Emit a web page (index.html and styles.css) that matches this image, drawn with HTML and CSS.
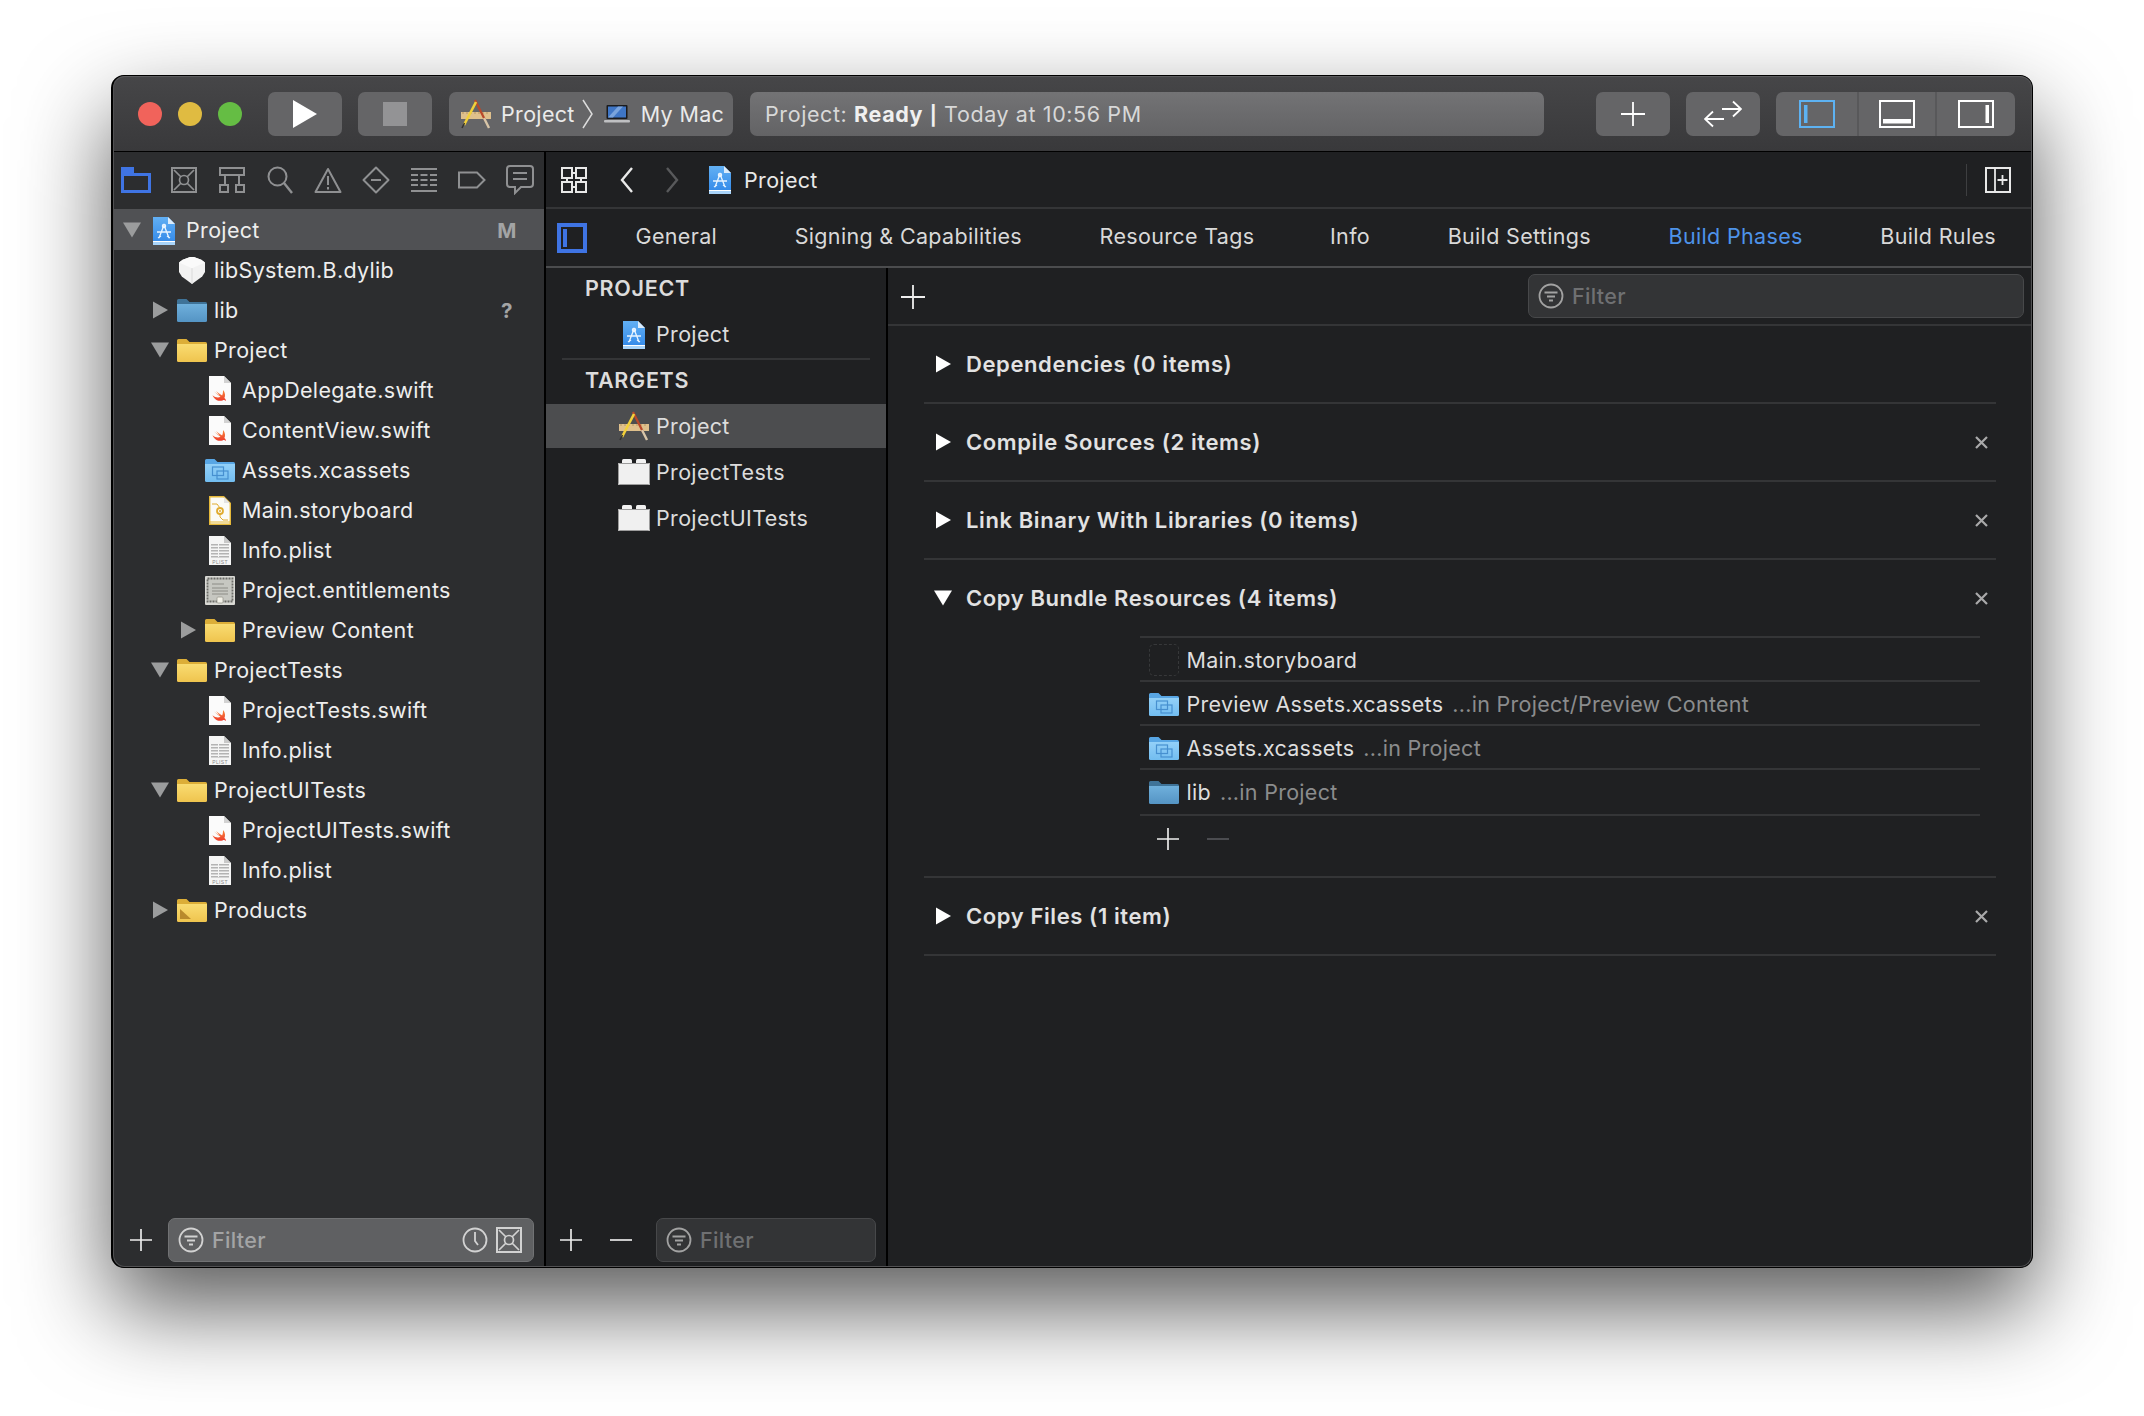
FILE: index.html
```html
<!DOCTYPE html>
<html lang="en">
<head>
<meta charset="utf-8">
<title>Project — Build Phases</title>
<link rel="stylesheet" href="styles.css">
</head>
<body>
<svg class="defs" width="0" height="0" aria-hidden="true">
  <defs>
    <linearGradient id="gy" x1="0" y1="0" x2="0" y2="1"><stop offset="0" stop-color="#f9dc72"/><stop offset="1" stop-color="#efc44e"/></linearGradient>
    <linearGradient id="gb" x1="0" y1="0" x2="0" y2="1"><stop offset="0" stop-color="#6fb0dc"/><stop offset="1" stop-color="#5494c4"/></linearGradient>
    <linearGradient id="gl" x1="0" y1="0" x2="0" y2="1"><stop offset="0" stop-color="#93d0f8"/><stop offset="1" stop-color="#72bdf0"/></linearGradient>
    <linearGradient id="gp" x1="0" y1="0" x2="0" y2="1"><stop offset="0" stop-color="#62b0f4"/><stop offset="1" stop-color="#2f86e8"/></linearGradient>
    <linearGradient id="gs" x1="0" y1="0" x2="0" y2="1"><stop offset="0" stop-color="#f8893a"/><stop offset="1" stop-color="#ee3b2d"/></linearGradient>
    <symbol id="folder" viewBox="0 0 30 24"><path d="M0 2.500A1.500 1.500 0 0 1 1.500 1h8l3 3H28.500A1.500 1.500 0 0 1 30 5.500V8H0z" fill="#dcae38"/><path d="M0 6h30v16.500a1.500 1.500 0 0 1-1.500 1.500h-27A1.500 1.500 0 0 1 0 22.500z" fill="url(#gy)"/></symbol>
    <symbol id="folder-products" viewBox="0 0 30 24"><use href="#folder" width="30" height="24"/><path d="M3 11l11 10H3z" fill="#b98a2c"/></symbol>
    <symbol id="folder-lib" viewBox="0 0 30 24"><path d="M0 2.500A1.500 1.500 0 0 1 1.500 1h8l3 3H28.500A1.500 1.500 0 0 1 30 5.500V8H0z" fill="#3f7398"/><path d="M0 6h30v16.500a1.500 1.500 0 0 1-1.500 1.500h-27A1.500 1.500 0 0 1 0 22.500z" fill="url(#gb)"/></symbol>
    <symbol id="folder-assets" viewBox="0 0 30 24"><path d="M0 2.500A1.500 1.500 0 0 1 1.500 1h8l3 3H28.500A1.500 1.500 0 0 1 30 5.500V8H0z" fill="#58a6e4"/><path d="M0 6h30v16.500a1.500 1.500 0 0 1-1.500 1.500h-27A1.500 1.500 0 0 1 0 22.500z" fill="url(#gl)"/><g fill="none" stroke="#4790d0" stroke-width="1.200"><rect x="7.500" y="9" width="11" height="8.500"/><rect x="12" y="13" width="11" height="8"/></g></symbol>
    <symbol id="doc-proj" viewBox="0 0 22 29"><path d="M0 1h15l7 7v21H0z" fill="url(#gp)"/><path d="M15 1l7 7h-7z" fill="#dcecfb"/><rect y="26" width="22" height="3" fill="#a9d4fa"/><rect y="25" width="22" height="1" fill="#fff"/><g fill="none" stroke="#e8f4ff" stroke-width="1.300"><path d="M6 22l5-13 5 13M4 16h14M8 20l-3 2M14 20l3 2"/><circle cx="11" cy="10" r="1.600"/></g></symbol>
    <symbol id="doc-swift" viewBox="0 0 22 29"><path d="M0 0h15l7 7v22H0z" fill="#fbfbfb"/><path d="M15 0l7 7h-7z" fill="#d2d2d2"/><path transform="translate(3 12.500) scale(.155 .135)" d="M72 12C85 32 88 55 80 70 88 78 92 88 90 92 84 85 76 84 68 88 50 96 28 90 14 70 8 62 5 55 3 50 20 65 38 72 55 62 40 50 25 35 12 20 25 32 40 45 52 52 42 42 32 28 25 18 40 30 52 42 65 52 72 38 70 25 72 12z" fill="url(#gs)"/></symbol>
    <symbol id="doc-board" viewBox="0 0 22 29"><path d="M.7.7h14l6.600 6.600v21H.7z" fill="#fbfbf6" stroke="#e6b93a" stroke-width="1.400"/><path d="M15 1l6 6h-6z" fill="#e3e3e3"/><path d="M3 8h5l3 4M11 17v4l3 3h5" fill="none" stroke="#e0ac30" stroke-width="1"/><circle cx="11" cy="15" r="3" fill="none" stroke="#e0ac30" stroke-width="1.800"/><circle cx="11" cy="15" r="1" fill="#e0ac30"/><path d="M1 26h20" stroke="#e6b93a" stroke-width="1"/></symbol>
    <symbol id="doc-plist" viewBox="0 0 22 29"><path d="M0 0h15l7 7v22H0z" fill="#f5f5f5"/><path d="M15 0l7 7h-7z" fill="#c8c8c8"/><g fill="#b4b4b4"><rect x="2" y="8" width="18" height="1.500"/><rect x="2" y="11" width="18" height="1.500"/><rect x="2" y="14" width="18" height="1.500"/><rect x="2" y="17" width="18" height="1.500"/><rect x="2" y="20" width="18" height="1.500"/></g><rect x="9" y="8" width="1" height="13" fill="#f5f5f5"/><text x="11" y="28" text-anchor="middle" font-family="Liberation Sans" font-size="5" fill="#8a8a8a">PLIST</text></symbol>
    <symbol id="cert" viewBox="0 0 30 29"><rect width="30" height="29" rx="1" fill="#d9d9d4"/><rect x="2.500" y="2.500" width="25" height="23" fill="#c6c7c1" stroke="#6c6c68" stroke-width="1.800" stroke-dasharray="2 1"/><path d="M7 8h12M7 12h16M7 15h16M7 18h16" stroke="#8c8c86" stroke-width="1"/><rect x="12" y="21" width="6" height="6" rx="1" fill="#f2f1e8" stroke="#9a9a90" stroke-width=".8"/></symbol>
    <symbol id="shield" viewBox="0 0 28 29"><path d="M4 3l8-3h4l8 3 4 3v10l-3 5-11 8-11-8-3-5V6z" fill="#f2f2f2"/><path d="M0 6l14 6 14-6-4-3-8-3h-4l-8 3z" fill="#fafafa"/><path d="M14 12v17" stroke="#d8d8d8" stroke-width="1"/></symbol>
    <symbol id="app" viewBox="0 0 30 30"><rect x="0" y="13" width="30" height="7" fill="#dfc08c"/><path d="M2 13v2M6 13v2M10 13v2M14 13v2M18 13v2M22 13v2M26 13v2" stroke="#a7854f" stroke-width=".7"/><path d="M14 1L24 21" stroke="#b8482a" stroke-width="2.200"/><path d="M23 19l5 10" stroke="#d8c5a8" stroke-width="2.400"/><path d="M15 3L3 26" stroke="#f2d03a" stroke-width="2.600"/><path d="M3.500 24L1 29" stroke="#333" stroke-width="1.500"/></symbol>
    <symbol id="lego" viewBox="0 0 32 26"><rect x="4" y="0" width="10" height="6" rx="1.500" fill="#f2f2f2"/><rect x="18" y="0" width="10" height="6" rx="1.500" fill="#f2f2f2"/><rect x="0" y="4" width="32" height="22" rx="1" fill="#f0f0f0"/><rect x=".5" y="4.500" width="31" height="21" rx="1" fill="none" stroke="#9c9c9c" stroke-width="1"/></symbol>
    <symbol id="mac" viewBox="0 0 26 18"><rect x="2.500" y="0" width="21" height="14" rx="1" fill="#1b1b1d"/><path d="M4 1.500h18v11H4z" fill="#3f76c6"/><path d="M4 12.500L14 1.500h5L9 12.500z" fill="#7aa4dd"/><rect x="0" y="15" width="26" height="2.500" rx="1" fill="#bfc0c2"/></symbol>
    <symbol id="tri-r" viewBox="0 0 28 18"><path d="M4 .5L19 9 4 17.500z"/></symbol>
    <symbol id="tri-d" viewBox="0 0 28 18"><path d="M2 1.500h18L11 16.500z"/></symbol>
    <symbol id="filter" viewBox="0 0 26 26"><circle cx="13" cy="13" r="11.500" fill="none" stroke="currentColor" stroke-width="1.800"/><path d="M6.500 9.500h13M9 13.500h8M11 17.500h4" stroke="currentColor" stroke-width="2"/></symbol>
    <symbol id="plus" viewBox="0 0 24 24"><path d="M12 0v24M0 12h24" stroke="currentColor" stroke-width="1.800" fill="none"/></symbol>
    <symbol id="minus" viewBox="0 0 24 24"><path d="M0 12h24" stroke="currentColor" stroke-width="1.800" fill="none"/></symbol>
    <symbol id="x" viewBox="0 0 13 13"><path d="M1 1l11 11M12 1L1 12" stroke="currentColor" stroke-width="2.200" fill="none"/></symbol>
    <symbol id="safe" viewBox="0 0 26 26"><rect x="1" y="1" width="24" height="24" fill="none" stroke="currentColor" stroke-width="2"/><circle cx="13" cy="13" r="4.500" fill="none" stroke="currentColor" stroke-width="1.700"/><path d="M3 3l7 7M23 3l-7 7M3 23l7-7M23 23l-7-7" stroke="currentColor" stroke-width="1.700"/></symbol>
    <symbol id="nv-folder" viewBox="0 0 30 26"><path d="M1.500 7.500h27v17h-27zM1.500 7.500V1.500h10v6" fill="none" stroke="#3f74e4" stroke-width="3"/><path d="M1 3h10v4H1z" fill="#3f74e4"/></symbol>
    <symbol id="nv-hier" viewBox="0 0 28 26"><g fill="none" stroke="currentColor" stroke-width="2"><rect x="2" y="1" width="24" height="7"/><path d="M7 8v10M21 8v10"/><rect x="2" y="18" width="8" height="7"/><rect x="18" y="18" width="8" height="7"/></g></symbol>
    <symbol id="nv-search" viewBox="0 0 26 28"><circle cx="10.500" cy="10.500" r="9" fill="none" stroke="currentColor" stroke-width="2"/><path d="M17 17l8 10" stroke="currentColor" stroke-width="2.400"/></symbol>
    <symbol id="nv-warn" viewBox="0 0 28 26"><path d="M14 2L26.500 25h-25z" fill="none" stroke="currentColor" stroke-width="2" stroke-linejoin="round"/><path d="M14 9v9M14 20v2.500" stroke="currentColor" stroke-width="2"/></symbol>
    <symbol id="nv-diamond" viewBox="0 0 28 28"><path d="M14 1.500L26.500 14 14 26.500 1.500 14z" fill="none" stroke="currentColor" stroke-width="2" stroke-linejoin="round"/><path d="M9 14h10" stroke="currentColor" stroke-width="2"/></symbol>
    <symbol id="nv-lines" viewBox="0 0 28 26"><path d="M1 2h26M1 24h26" stroke="currentColor" stroke-width="2"/><path d="M1 8h26M1 13h26M1 18h26" stroke="currentColor" stroke-width="2" stroke-dasharray="7 2.500"/></symbol>
    <symbol id="nv-tag" viewBox="0 0 28 18"><path d="M1 1.500h18l7.500 7.500-7.500 7.500H1z" fill="none" stroke="currentColor" stroke-width="2"/></symbol>
    <symbol id="nv-bubble" viewBox="0 0 28 30"><path d="M4 1h20a3 3 0 0 1 3 3v15a3 3 0 0 1-3 3H15l-6 6v-6H4a3 3 0 0 1-3-3V4a3 3 0 0 1 3-3z" fill="none" stroke="currentColor" stroke-width="2"/><path d="M7 8h14M7 14h14" stroke="currentColor" stroke-width="2"/></symbol>
    <symbol id="grid" viewBox="0 0 26 26"><g fill="none" stroke="currentColor" stroke-width="2"><path d="M1 1h10v10H1zM15 1h10v10H15zM1 15h10v10H1zM15 15h10v10H15z"/><path d="M11 6h4M20 11v4M6 11v4M11 20h4"/></g></symbol>
    <symbol id="addpane" viewBox="0 0 26 26"><rect x="1" y="1" width="24" height="24" fill="none" stroke="currentColor" stroke-width="2"/><path d="M10 1v24M17.500 8v10M12.500 13h10" stroke="currentColor" stroke-width="1.800" fill="none"/></symbol>
    <symbol id="pane-l" viewBox="0 0 36 28"><rect x="1" y="1" width="34" height="26" fill="none" stroke="currentColor" stroke-width="2"/><rect x="5" y="5" width="3.500" height="18" fill="currentColor"/></symbol>
    <symbol id="pane-b" viewBox="0 0 36 28"><rect x="1" y="1" width="34" height="26" fill="none" stroke="currentColor" stroke-width="2"/><rect x="4" y="19" width="28" height="4.500" fill="currentColor"/></symbol>
    <symbol id="pane-r" viewBox="0 0 36 28"><rect x="1" y="1" width="34" height="26" fill="none" stroke="currentColor" stroke-width="2"/><rect x="27.500" y="5" width="3.500" height="18" fill="currentColor"/></symbol>
    <symbol id="swap" viewBox="0 0 38 34"><path d="M18 12h19M29 4.500l8 7.500-8 7.500" fill="none" stroke="currentColor" stroke-width="1.800"/><path d="M1 22h19M9 14.500L1 22l8 7.500" fill="none" stroke="currentColor" stroke-width="1.800"/></symbol>
  </defs>
</svg>

<div class="window">
  <header class="toolbar">
    <div class="lights"><span class="light red"></span><span class="light yellow"></span><span class="light green"></span></div>
    <button class="tbtn play"><svg width="24" height="28" viewBox="0 0 24 28"><path d="M0 0l24 14L0 28z" fill="#fff"/></svg></button>
    <button class="tbtn stop"><span class="stop-box"></span></button>
    <div class="tbtn scheme">
      <svg class="ic-app" width="30" height="30"><use href="#app"/></svg>
      <span>Project</span>
      <svg class="chev" width="11" height="30" viewBox="0 0 11 30"><path d="M1 1l9 14-9 14" fill="none" stroke="#dcdcdc" stroke-width="1.500"/></svg>
      <svg class="ic-mac" width="26" height="18"><use href="#mac"/></svg>
      <span>My Mac</span>
    </div>
    <div class="status"><span>Project: <b>Ready</b> <b class="pipe">|</b> Today at 10:56 PM</span></div>
    <button class="tbtn add"><svg width="24" height="24"><use href="#plus"/></svg></button>
    <button class="tbtn arrows"><svg width="38" height="34"><use href="#swap"/></svg></button>
    <div class="segments">
      <span class="seg seg-on"><svg width="36" height="28"><use href="#pane-l"/></svg></span>
      <span class="seg seg-mid"><svg width="36" height="28"><use href="#pane-b"/></svg></span>
      <span class="seg seg-end"><svg width="36" height="28"><use href="#pane-r"/></svg></span>
    </div>
  </header>

  <div class="workspace">
    <aside class="sidebar">
      <nav class="sidebar-nav">
        <svg width="30" height="26"><use href="#nv-folder"/></svg>
        <svg width="26" height="26"><use href="#safe"/></svg>
        <svg width="28" height="26"><use href="#nv-hier"/></svg>
        <svg width="26" height="28"><use href="#nv-search"/></svg>
        <svg width="28" height="26"><use href="#nv-warn"/></svg>
        <svg width="28" height="28"><use href="#nv-diamond"/></svg>
        <svg width="28" height="26"><use href="#nv-lines"/></svg>
        <svg width="28" height="18"><use href="#nv-tag"/></svg>
        <svg width="28" height="30"><use href="#nv-bubble"/></svg>
      </nav>
      <ul class="tree">
        <li class="node l0 selected"><svg class="disc" width="28" height="18"><use href="#tri-d"/></svg><span class="slot"><svg width="22" height="29"><use href="#doc-proj"/></svg></span><span class="name">Project</span><span class="badge">M</span></li>
        <li class="node l1"><span class="disc"></span><span class="slot"><svg width="26" height="29"><use href="#shield"/></svg></span><span class="name">libSystem.B.dylib</span></li>
        <li class="node l1"><svg class="disc" width="28" height="18"><use href="#tri-r"/></svg><span class="slot"><svg width="30" height="24"><use href="#folder-lib"/></svg></span><span class="name">lib</span><span class="badge">?</span></li>
        <li class="node l1"><svg class="disc" width="28" height="18"><use href="#tri-d"/></svg><span class="slot"><svg width="30" height="24"><use href="#folder"/></svg></span><span class="name">Project</span></li>
        <li class="node l2"><span class="disc"></span><span class="slot"><svg width="22" height="29"><use href="#doc-swift"/></svg></span><span class="name">AppDelegate.swift</span></li>
        <li class="node l2"><span class="disc"></span><span class="slot"><svg width="22" height="29"><use href="#doc-swift"/></svg></span><span class="name">ContentView.swift</span></li>
        <li class="node l2"><span class="disc"></span><span class="slot"><svg width="30" height="24"><use href="#folder-assets"/></svg></span><span class="name">Assets.xcassets</span></li>
        <li class="node l2"><span class="disc"></span><span class="slot"><svg width="22" height="29"><use href="#doc-board"/></svg></span><span class="name">Main.storyboard</span></li>
        <li class="node l2"><span class="disc"></span><span class="slot"><svg width="22" height="29"><use href="#doc-plist"/></svg></span><span class="name">Info.plist</span></li>
        <li class="node l2"><span class="disc"></span><span class="slot"><svg width="30" height="29"><use href="#cert"/></svg></span><span class="name">Project.entitlements</span></li>
        <li class="node l2"><svg class="disc" width="28" height="18"><use href="#tri-r"/></svg><span class="slot"><svg width="30" height="24"><use href="#folder"/></svg></span><span class="name">Preview Content</span></li>
        <li class="node l1"><svg class="disc" width="28" height="18"><use href="#tri-d"/></svg><span class="slot"><svg width="30" height="24"><use href="#folder"/></svg></span><span class="name">ProjectTests</span></li>
        <li class="node l2"><span class="disc"></span><span class="slot"><svg width="22" height="29"><use href="#doc-swift"/></svg></span><span class="name">ProjectTests.swift</span></li>
        <li class="node l2"><span class="disc"></span><span class="slot"><svg width="22" height="29"><use href="#doc-plist"/></svg></span><span class="name">Info.plist</span></li>
        <li class="node l1"><svg class="disc" width="28" height="18"><use href="#tri-d"/></svg><span class="slot"><svg width="30" height="24"><use href="#folder"/></svg></span><span class="name">ProjectUITests</span></li>
        <li class="node l2"><span class="disc"></span><span class="slot"><svg width="22" height="29"><use href="#doc-swift"/></svg></span><span class="name">ProjectUITests.swift</span></li>
        <li class="node l2"><span class="disc"></span><span class="slot"><svg width="22" height="29"><use href="#doc-plist"/></svg></span><span class="name">Info.plist</span></li>
        <li class="node l1"><svg class="disc" width="28" height="18"><use href="#tri-r"/></svg><span class="slot"><svg width="30" height="24"><use href="#folder-products"/></svg></span><span class="name">Products</span></li>
      </ul>
      <footer class="side-foot">
        <svg class="foot-plus" width="22" height="22"><use href="#plus"/></svg>
        <div class="filter filter-light">
          <svg class="filter-ic" width="26" height="26"><use href="#filter"/></svg>
          <span class="filter-text">Filter</span>
          <svg class="clock" width="26" height="26" viewBox="0 0 26 26"><circle cx="13" cy="13" r="11.500" fill="none" stroke="currentColor" stroke-width="1.800"/><path d="M13 5v9l3 4" fill="none" stroke="currentColor" stroke-width="1.800"/></svg>
          <svg class="safe" width="26" height="26"><use href="#safe"/></svg>
        </div>
      </footer>
    </aside>

    <section class="editor">
      <div class="jump">
        <svg class="j-grid" width="26" height="26"><use href="#grid"/></svg>
        <svg class="j-back" width="14" height="26" viewBox="0 0 14 26"><path d="M12 1L2 13l10 12" fill="none" stroke="#eaeaea" stroke-width="2.400"/></svg>
        <svg class="j-fwd" width="14" height="26" viewBox="0 0 14 26"><path d="M2 1l10 12L2 25" fill="none" stroke="#58595b" stroke-width="2.400"/></svg>
        <svg class="j-doc" width="22" height="29"><use href="#doc-proj"/></svg>
        <span class="j-name">Project</span>
        <span class="j-div"></span>
        <svg class="j-add" width="26" height="26"><use href="#addpane"/></svg>
      </div>
      <div class="tabs">
        <svg class="tabs-ic" width="30" height="30" viewBox="0 0 30 30"><rect x="2" y="2" width="26" height="26" fill="none" stroke="#3f74e4" stroke-width="4"/><rect x="6" y="6" width="4" height="18" fill="#3f74e4"/></svg>
        <span class="tab">General</span>
        <span class="tab">Signing &amp; Capabilities</span>
        <span class="tab">Resource Tags</span>
        <span class="tab tab-info">Info</span>
        <span class="tab">Build Settings</span>
        <span class="tab tab-on">Build Phases</span>
        <span class="tab">Build Rules</span>
      </div>
      <div class="panes">
        <div class="targets">
          <div class="t-list">
            <div class="t-head">PROJECT</div>
            <div class="t-row t-first"><span class="t-slot"><svg width="22" height="29"><use href="#doc-proj"/></svg></span>Project</div>
            <div class="t-sep"></div>
            <div class="t-head t-head2">TARGETS</div>
            <div class="t-row t-on"><span class="t-slot"><svg width="30" height="30"><use href="#app"/></svg></span>Project</div>
            <div class="t-row"><span class="t-slot"><svg width="32" height="26"><use href="#lego"/></svg></span>ProjectTests</div>
            <div class="t-row"><span class="t-slot"><svg width="32" height="26"><use href="#lego"/></svg></span>ProjectUITests</div>
          </div>
          <footer class="t-foot">
            <svg class="t-plus" width="22" height="22"><use href="#plus"/></svg>
            <svg class="t-minus" width="22" height="22"><use href="#minus"/></svg>
            <div class="filter filter-dark t-filter">
              <svg class="filter-ic" width="26" height="26"><use href="#filter"/></svg>
              <span class="filter-text">Filter</span>
            </div>
          </footer>
        </div>
        <main class="phases">
          <div class="ph-bar">
            <svg class="ph-plus" width="24" height="24"><use href="#plus"/></svg>
            <div class="filter filter-dark ph-filter">
              <svg class="filter-ic" width="26" height="26"><use href="#filter"/></svg>
              <span class="filter-text">Filter</span>
            </div>
          </div>
          <div class="ph-list">
            <section class="phase">
              <div class="ph-head"><svg class="ph-tri" width="28" height="18"><use href="#tri-r"/></svg><span class="ph-title">Dependencies (0 items)</span></div>
            </section>
            <section class="phase">
              <div class="ph-head"><svg class="ph-tri" width="28" height="18"><use href="#tri-r"/></svg><span class="ph-title">Compile Sources (2 items)</span><svg class="ph-x" width="13" height="13"><use href="#x"/></svg></div>
            </section>
            <section class="phase">
              <div class="ph-head"><svg class="ph-tri" width="28" height="18"><use href="#tri-r"/></svg><span class="ph-title">Link Binary With Libraries (0 items)</span><svg class="ph-x" width="13" height="13"><use href="#x"/></svg></div>
            </section>
            <section class="phase">
              <div class="ph-head"><svg class="ph-tri" width="28" height="18"><use href="#tri-d"/></svg><span class="ph-title">Copy Bundle Resources (4 items)</span><svg class="ph-x" width="13" height="13"><use href="#x"/></svg></div>
              <div class="res">
                <div class="res-row"><span class="res-ic"><span class="placeholder"></span></span><span>Main.storyboard</span></div>
                <div class="res-row"><span class="res-ic"><svg width="30" height="24"><use href="#folder-assets"/></svg></span><span>Preview Assets.xcassets</span><span class="res-path">...in Project/Preview Content</span></div>
                <div class="res-row"><span class="res-ic"><svg width="30" height="24"><use href="#folder-assets"/></svg></span><span>Assets.xcassets</span><span class="res-path">...in Project</span></div>
                <div class="res-row res-last"><span class="res-ic"><svg width="30" height="24"><use href="#folder-lib"/></svg></span><span>lib</span><span class="res-path">...in Project</span></div>
                <div class="res-tools"><svg class="r-plus" width="22" height="22"><use href="#plus"/></svg><svg class="r-minus" width="22" height="22"><use href="#minus"/></svg></div>
              </div>
            </section>
            <section class="phase">
              <div class="ph-head"><svg class="ph-tri" width="28" height="18"><use href="#tri-r"/></svg><span class="ph-title">Copy Files (1 item)</span><svg class="ph-x" width="13" height="13"><use href="#x"/></svg></div>
            </section>
          </div>
        </main>
      </div>
    </section>
  </div>
</div>
</body>
</html>
```

FILE: styles.css
```css
* { box-sizing: border-box; }
html, body { margin: 0; height: 100%; }
body {
  background: #fff;
  padding: 75px 0 0 111px;
  overflow: hidden;
  font-family: "Inter", "Liberation Sans", sans-serif;
  font-size: 21.5px;
  letter-spacing: .33px;
  color: #e6e6e6;
}
.defs { position: absolute; }
svg { display: block; flex: none; }
button { border: 0; padding: 0; font: inherit; color: inherit; }
ul { list-style: none; margin: 0; padding: 0; }

.window {
  position: relative;
  width: 1922px;
  height: 1193px;
  border: 1px solid #000;
  border-left-width: 2px;
  border-radius: 13px;
  overflow: hidden;
  display: flex;
  flex-direction: column;
  background: #1f2022;
  box-shadow: 0 40px 90px rgba(0,0,0,.65);
}
.window::after {
  content: "";
  position: absolute;
  inset: 0;
  border: 1.5px solid #515153;
  border-top-color: #5c5c5e;
  border-radius: 12px;
  pointer-events: none;
}

/* toolbar */
.toolbar {
  height: 76px;
  flex: none;
  display: flex;
  align-items: center;
  padding: 1px 0 0 25px;
  background: linear-gradient(#464648, #39393b);
  border-bottom: 1px solid #000;
}
.lights { display: flex; gap: 16px; margin-right: 26px; }
.light { width: 24px; height: 24px; border-radius: 50%; }
.red { background: #f1635b; }
.yellow { background: #e0bb41; }
.green { background: #65bd44; }
.tbtn {
  height: 44px;
  border-radius: 7px;
  background: #656567;
  display: flex;
  align-items: center;
  justify-content: center;
  color: #fff;
}
.play { width: 74px; margin-right: 16px; }
.stop { width: 74px; margin-right: 17px; }
.stop-box { width: 24px; height: 24px; background: #939395; }
.scheme {
  width: 284px;
  margin-right: 17px;
  justify-content: flex-start;
  padding-left: 12px;
  color: #eaeaea;
}
.ic-app { margin-right: 10px; }
.chev { margin: 0 11px 0 7px; }
.ic-mac { margin-right: 11px; }
.status {
  width: 794px;
  height: 44px;
  margin-right: 52px;
  border-radius: 7px;
  background: linear-gradient(#737375, #636365);
  display: flex;
  align-items: center;
  padding-left: 15px;
  color: #d8d8d8;
  letter-spacing: .6px;
}
.status b { font-weight: 700; color: #f0f0f0; }
.status .pipe { font-size: 19px; }
.add { width: 74px; margin-right: 16px; }
.arrows { width: 74px; margin-right: 16px; }
.segments {
  width: 239px;
  height: 44px;
  display: flex;
  border-radius: 7px;
  overflow: hidden;
  background: #656567;
  color: #fff;
}
.seg { display: flex; align-items: center; justify-content: center; }
.seg-on { width: 81px; color: #5db2f2; }
.seg-mid { width: 78px; border-left: 2px solid #58585a; }
.seg-end { width: 80px; border-left: 2px solid #58585a; }

/* workspace */
.workspace { flex: 1; min-height: 0; display: flex; }
.sidebar {
  width: 433px;
  flex: none;
  background: #2c2d2f;
  border-right: 2px solid #000;
  display: flex;
  flex-direction: column;
}
.sidebar-nav {
  height: 57px;
  flex: none;
  display: grid;
  grid-template-columns: repeat(9, 48px);
  justify-items: center;
  align-items: center;
  padding-bottom: 1px;
  margin-left: -1px;
  color: #8f9092;
}
.tree { flex: 1; min-height: 0; }
.node { height: 40px; display: flex; align-items: center; padding-right: 25px; color: #eeeeee; }
.node.selected { height: 41px; background: #505154; padding-top: 1px; }
.l0 { padding-left: 8px; }
.l1 { padding-left: 36px; }
.l2 { padding-left: 64px; }
.disc { width: 28px; height: 18px; flex: none; fill: #9b9c9d; }
.slot { width: 30px; margin-right: 7px; display: flex; justify-content: center; flex: none; }
.name { flex: 1; white-space: nowrap; }
.badge { width: 24px; text-align: center; font-weight: 700; color: #a3a4a5; font-size: 20.500px; }
.side-foot { display: flex; align-items: center; height: 44px; margin-bottom: 5px; flex: none; color: #eee; }
.foot-plus { margin: 0 16px 0 17px; }

.filter {
  height: 44px;
  border-radius: 7px;
  display: flex;
  align-items: center;
  padding-left: 9px;
  font-weight: 500;
}
.filter-ic { margin-right: 8px; }
.filter-text { flex: 1; }
.filter-light { width: 366px; background: #5f6062; border: 1px solid #717274; color: #a3a4a5; }
.filter-light .filter-ic, .clock, .safe { color: #d2d2d2; }
.clock { margin-right: 8px; }
.safe { margin-right: 11px; }
.filter-dark { background: #333436; border: 1px solid #47484a; color: #6f7072; }
.filter-dark .filter-ic { color: #a2a2a2; }

/* editor */
.editor { flex: 1; min-width: 0; display: flex; flex-direction: column; }
.jump {
  height: 57px;
  flex: none;
  display: flex;
  align-items: center;
  border-bottom: 2px solid #343537;
  color: #e8e8e8;
  padding-right: 21px;
}
.j-grid { margin: 0 33px 0 15px; }
.j-back { margin-right: 31px; }
.j-fwd { margin-right: 30px; }
.j-doc { margin-right: 13px; }
.j-name { flex: 1; }
.j-div { width: 1px; height: 32px; background: #3e3f41; margin-right: 18px; }
.tabs {
  height: 59px;
  flex: none;
  display: flex;
  align-items: center;
  gap: 77.600px;
  padding: 0 0 3px 11px;
  border-bottom: 2px solid #4b4c4e;
  color: #d9d9d9;
}
.tabs-ic { margin: 3px -29px 0 0; }
.tab-info { margin-left: -2px; }
.tab-on { color: #4e93ea; }

.panes { flex: 1; min-height: 0; display: flex; }
.targets {
  width: 342px;
  flex: none;
  border-right: 2px solid #000;
  display: flex;
  flex-direction: column;
}
.t-list { flex: 1; }
.t-head { height: 40px; display: flex; align-items: center; padding-left: 39px; font-weight: 600; letter-spacing: .7px; color: #dcdcdc; }
.t-head2 { margin-bottom: 4px; }
.t-row { height: 46px; display: flex; align-items: center; padding-left: 72px; color: #dcdcdc; }
.t-first { margin-top: 3px; }
.t-slot { width: 32px; margin-right: 6px; display: flex; justify-content: center; flex: none; }
.t-on { height: 44px; background: #4c4d4f; margin-bottom: 1px; }
.t-sep { height: 2px; margin: 1px 16px 0; background: #343537; }
.t-foot { height: 44px; display: flex; align-items: center; margin-bottom: 5px; color: #eee; flex: none; }
.t-plus { margin: 0 28px 0 14px; }
.t-minus { margin-right: 24px; }
.t-filter { width: 220px; }

.phases { flex: 1; min-width: 0; }
.ph-bar {
  height: 58px;
  display: flex;
  align-items: center;
  border-bottom: 2px solid #343537;
  padding: 0 8px 0 13px;
  color: #eee;
}
.ph-plus { margin-top: 2px; flex: none; }
.ph-filter { width: 496px; margin-left: auto; }
.ph-list { padding: 0 36px 0 36px; }
.phase { border-bottom: 2px solid #343537; }
.ph-head { height: 76px; display: flex; align-items: center; padding: 0 8px 0 8px; color: #e2e2e2; }
.ph-tri { margin-right: 6px; fill: #fff; }
.ph-title { flex: 1; font-weight: 600; font-size: 22px; letter-spacing: .6px; }
.ph-x { color: #a9a9aa; }
.res { margin: 0 16px 0 216px; color: #dedede; letter-spacing: .28px; }
.res-row { height: 44px; display: flex; align-items: center; border-top: 2px solid #343537; padding: 1px 0 0 9px; white-space: nowrap; }
.res-last { height: 48px; padding-bottom: 2px; border-bottom: 2px solid #343537; }
.res-ic { width: 30px; margin-right: 7.500px; display: flex; flex: none; }
.placeholder { width: 32px; height: 32px; border: 1px dashed #37383a; border-radius: 5px; }
.res-path { margin-left: 9px; color: #8b8c8d; }
.res-tools { height: 60px; display: flex; align-items: flex-start; padding-top: 12px; color: #eee; }
.r-plus { margin-left: 17px; margin-right: 28px; }
.r-minus { color: #56575a; }
```
